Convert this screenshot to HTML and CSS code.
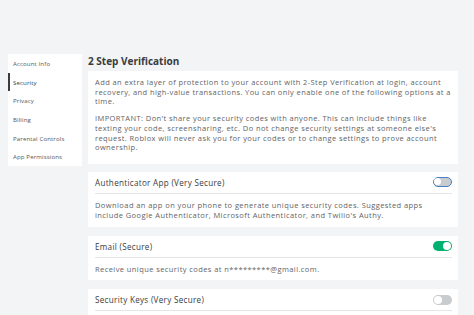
FILE: index.html
```html
<!DOCTYPE html>
<html lang="en">
<head>
    <meta charset="UTF-8">
    <meta name="viewport" content="width=device-width, initial-scale=1.0">
    <title>Security Settings</title>
    <link rel="stylesheet" href="styles.css">
</head>
<body>

    <div class="page">
        <ul class="menu">
            <li class="menu-item">Account Info</li>
            <li class="menu-item active">Security</li>
            <li class="menu-item">Privacy</li>
            <li class="menu-item">Billing</li>
            <li class="menu-item">Parental Controls</li>
            <li class="menu-item">App Permissions</li>
        </ul>

        <div class="content">
            <h2 class="title">2 Step Verification</h2>

            <div class="card intro">
                <p>Add an extra layer of protection to your account with 2-Step Verification at login, account recovery, and high-value transactions. You can only enable one of the following options at a time.</p>
                <p>IMPORTANT: Don't share your security codes with anyone. This can include things like texting your code, screensharing, etc. Do not change security settings at someone else's request. Roblox will never ask you for your codes or to change settings to prove account ownership.</p>
            </div>

            <div class="card option">
                <div class="option-head">
                    <span class="option-name">Authenticator App (Very Secure)</span>
                    <span class="toggle focused"></span>
                </div>
                <div class="option-body">Download an app on your phone to generate unique security codes. Suggested apps include Google Authenticator, Microsoft Authenticator, and Twilio's Authy.</div>
            </div>

            <div class="card option">
                <div class="option-head">
                    <span class="option-name">Email (Secure)</span>
                    <span class="toggle on"></span>
                </div>
                <div class="option-body">Receive unique security codes at n*********@gmail.com.</div>
            </div>

            <div class="card option">
                <div class="option-head">
                    <span class="option-name">Security Keys (Very Secure)</span>
                    <span class="toggle"></span>
                </div>
                <div class="option-body empty"></div>
            </div>
        </div>
    </div>

</body>
</html>
```

FILE: styles.css
```css
body {
    margin: 0;
    height: 315px;
    background-color: #f2f4f5;
    font-family: "Open Sans", "Noto Sans", sans-serif;
    color: #393b3d;
    overflow: hidden;
}
.page {
    display: flex;
    align-items: flex-start;
    gap: 6px;
    padding: 54px 0 0 8px;
}
.menu {
    list-style: none;
    margin: 0;
    padding: 0;
    width: 74px;
    background-color: #fff;
}
.menu-item {
    height: 18.7px;
    line-height: 19.5px;
    padding-left: 3px;
    font-size: 6.1px;
    letter-spacing: 0.12px;
    color: #56585a;
    border-left: 2px solid transparent;
}
.menu-item.active {
    border-left-color: #393b3d;
    color: #393b3d;
}
.content {
    width: 370px;
}
.title {
    margin: 0 0 3px;
    font-size: 10px;
    line-height: 14px;
    font-weight: 700;
    color: #393b3d;
}
.card {
    background-color: #fff;
    margin-bottom: 8px;
}
.intro {
    padding: 7px 7px 4px;
    font-size: 7.5px;
    line-height: 9.7px;
    letter-spacing: 0.4px;
    color: #636466;
}
.intro p {
    margin: 0 0 7px;
}
.option {
    padding: 0 6px 0 7px;
}
.option + .option {
    margin-top: 9px;
}
.option-head {
    display: flex;
    justify-content: space-between;
    align-items: center;
    height: 21px;
    border-bottom: 1px solid #e3e5e7;
}
.option-name {
    font-size: 8.1px;
    letter-spacing: 0.3px;
    color: #393b3d;
}
.option-body {
    padding: 6px 0;
    font-size: 7.5px;
    line-height: 10.5px;
    letter-spacing: 0.42px;
    color: #636466;
}
.option-body.empty {
    height: 20px;
}
.toggle {
    position: relative;
    width: 19px;
    height: 10px;
    border-radius: 5px;
    background-color: #c9cccf;
    box-sizing: border-box;
}
.toggle::after {
    content: "";
    position: absolute;
    top: 1px;
    left: 1px;
    width: 8px;
    height: 8px;
    border-radius: 50%;
    background-color: #fff;
}
.toggle.focused {
    border: 1.5px solid #4a7fc1;
}
.toggle.focused::after {
    top: 0;
    left: 0;
    width: 7px;
    height: 7px;
}
.toggle.on {
    background-color: #00b06f;
}
.toggle.on::after {
    left: auto;
    right: 1px;
}
```
